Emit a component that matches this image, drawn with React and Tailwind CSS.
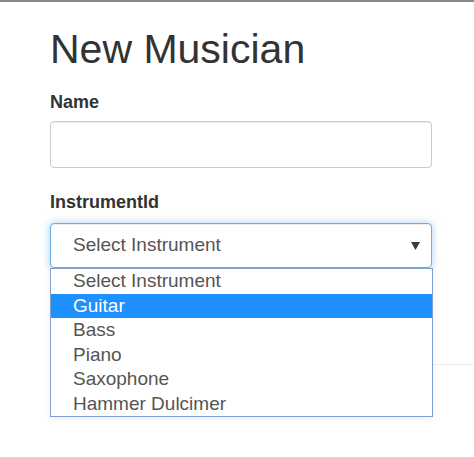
import React from 'react';

const options = ['Select Instrument', 'Guitar', 'Bass', 'Piano', 'Saxophone', 'Hammer Dulcimer'];

export default function App() {
  const selected = 'Guitar';

  return (
    <div className="min-h-[457px] bg-white border-t-2 border-[#888888] font-['Liberation_Sans',Arial,sans-serif] text-[#333333]">
      <div className="pl-[50px] pr-[42px]">
        <h1 className="mt-[25px] text-[41px] leading-[45px] font-normal">New Musician</h1>

        <div className="mt-[18px] flex flex-col">
          <label className="text-[18px] leading-[24px] font-bold">Name</label>
          <input
            type="text"
            className="mt-[7px] h-[47px] w-full rounded-[4px] border border-[#cccccc] bg-white px-[22px] text-[19px] outline-none shadow-[inset_0_1px_1px_rgba(0,0,0,0.075)]"
          />
        </div>

        <div className="mt-[22px] flex flex-col">
          <label className="text-[18px] leading-[24px] font-bold">InstrumentId</label>
          <div className="relative mt-[9px]">
            <div className="flex h-[45px] items-center justify-between rounded-[4px] border border-[#66afe9] bg-white pl-[22px] pr-[11px] text-[19px] text-[#555555] shadow-[inset_0_1px_1px_rgba(0,0,0,0.075),0_0_8px_rgba(102,175,233,0.6)]">
              <span>Select Instrument</span>
              <svg width="9" height="8" viewBox="0 0 9 8" className="mt-[1px]">
                <path d="M0 0 H9 L4.5 8 Z" fill="#3a3a3a" />
              </svg>
            </div>

            <ul className="absolute left-0 top-full z-10 w-[383px] border border-[#7f9fd6] bg-white shadow-[0_2px_6px_rgba(0,0,0,0.06)]">
              {options.map(opt => (
                <li
                  key={opt}
                  className={
                    opt === selected
                      ? 'h-[24.5px] pl-[22px] text-[19px] leading-[24.5px] bg-[#1e90ff] text-white'
                      : 'h-[24.5px] pl-[22px] text-[19px] leading-[24.5px] text-[#555555]'
                  }
                >
                  {opt}
                </li>
              ))}
            </ul>
          </div>
        </div>

        <hr className="mt-[96px] -mr-[42px] border-t border-[#eeeeee]" />
      </div>
    </div>
  );
}
